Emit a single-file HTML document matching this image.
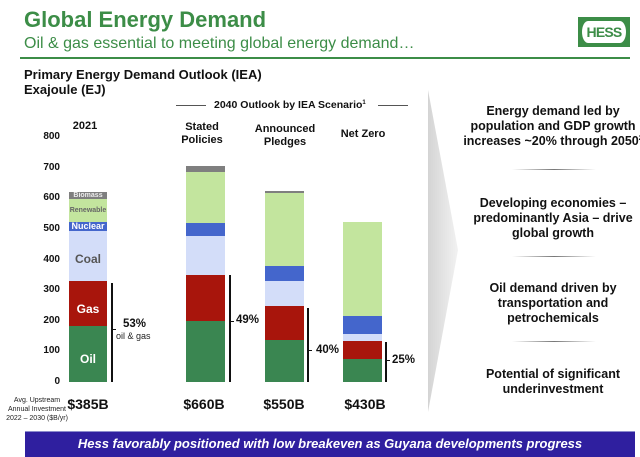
<!DOCTYPE html><html><head><style>
body{margin:0;width:640px;height:456px;background:#fff;position:relative;overflow:hidden;font-family:"Liberation Sans",Arial,sans-serif;}
.a{position:absolute;white-space:nowrap}
.b{position:absolute}
.c{text-align:center;font-weight:bold;color:#111}
.y{position:absolute;left:30px;width:30px;text-align:right;font-size:10px;font-weight:bold;color:#111}
.r{position:absolute;left:462px;width:182px;text-align:center;font-size:12.5px;font-weight:bold;line-height:15px;color:#111}
.sep{position:absolute;left:512px;width:84px;height:1px;background:linear-gradient(90deg,#fff,#777,#fff)}
sup{line-height:0;vertical-align:0;position:relative;top:-5px}
</style></head><body>
<div class="a" style="left:24px;top:7px;font-size:22px;font-weight:bold;color:#3c8d47">Global Energy Demand</div>
<div class="a" style="left:24px;top:35px;font-size:16px;color:#3c8d47">Oil &amp; gas essential to meeting global energy demand…</div>
<div class="b" style="left:20px;top:57px;width:610px;height:2px;background:#3c8d47"></div>
<div class="b" style="left:578px;top:17px;width:52px;height:30px;background:#3c8d47"></div>
<div class="b" style="left:582px;top:21px;width:44px;height:22px;background:#fff;border-radius:6px/11px"></div>
<div class="a" style="left:578px;top:24px;width:52px;text-align:center;font-size:14px;font-weight:900;color:#3c8d47;letter-spacing:-0.8px">HESS</div>
<div class="a" style="left:24px;top:67px;font-size:13px;font-weight:bold;color:#111;line-height:15px">Primary Energy Demand Outlook (IEA)<br>Exajoule (EJ)</div>
<div class="b" style="left:176px;top:105px;width:30px;height:1px;background:#555"></div>
<div class="a" style="left:214px;top:99px;font-size:10.5px;font-weight:bold;color:#111">2040 Outlook by IEA Scenario<sup style="font-size:6px;top:-4px">1</sup></div>
<div class="b" style="left:378px;top:105px;width:30px;height:1px;background:#555"></div>
<svg class="b" style="left:428px;top:90px" width="34" height="325"><defs><linearGradient id="g" x1="0" x2="1"><stop offset="0" stop-color="#d4d4d4"/><stop offset="1" stop-color="#f2f2f2"/></linearGradient></defs><polygon points="0,0 30,160 0,322" fill="url(#g)"/></svg>
<div class="y" style="top:131px">800</div><div class="y" style="top:162px">700</div><div class="y" style="top:192px">600</div><div class="y" style="top:223px">500</div><div class="y" style="top:254px">400</div><div class="y" style="top:284px">300</div><div class="y" style="top:315px">200</div><div class="y" style="top:345px">100</div><div class="y" style="top:376px">0</div>
<div class="a c" style="left:65px;width:40px;top:120px;font-size:11px">2021</div>
<div class="a c" style="left:172px;width:60px;top:121px;font-size:11px;line-height:13px">Stated<br>Policies</div>
<div class="a c" style="left:250px;width:70px;top:123px;font-size:11px;line-height:13px">Announced<br>Pledges</div>
<div class="a c" style="left:333px;width:60px;top:128px;font-size:11px">Net Zero</div>
<div class="b" style="left:69px;top:192px;width:38px;height:7px;background:#7f7f7f"></div>
<div class="b" style="left:69px;top:199px;width:38px;height:23px;background:#c3e59e"></div>
<div class="b" style="left:69px;top:222px;width:38px;height:9px;background:#4466cc"></div>
<div class="b" style="left:69px;top:231px;width:38px;height:50px;background:#d3ddf9"></div>
<div class="b" style="left:69px;top:281px;width:38px;height:45px;background:#a8150c"></div>
<div class="b" style="left:69px;top:326px;width:38px;height:56px;background:#3a8651"></div>
<div class="a" style="left:69px;width:38px;text-align:center;top:192px;font-size:7px;font-weight:bold;color:#eee">Biomass</div>
<div class="a" style="left:69px;width:38px;text-align:center;top:207px;font-size:7px;font-weight:bold;color:#666">Renewable</div>
<div class="a" style="left:69px;width:38px;text-align:center;top:221px;font-size:9px;font-weight:bold;color:#fff">Nuclear</div>
<div class="a" style="left:69px;width:38px;text-align:center;top:252px;font-size:12px;font-weight:bold;color:#555">Coal</div>
<div class="a" style="left:69px;width:38px;text-align:center;top:302px;font-size:12px;font-weight:bold;color:#fff">Gas</div>
<div class="a" style="left:69px;width:38px;text-align:center;top:352px;font-size:12px;font-weight:bold;color:#fff">Oil</div>
<div class="b" style="left:111px;top:283px;width:2px;height:99px;background:#111"></div><div class="b" style="left:113px;top:329px;width:3px;height:1px;background:#111"></div>
<div class="a" style="left:123px;top:318px;font-size:11.5px;font-weight:bold;color:#111">53%</div>
<div class="a" style="left:116px;top:331px;font-size:9px;color:#222">oil &amp; gas</div>
<div class="b" style="left:186px;top:166px;width:39px;height:6px;background:#7f7f7f"></div>
<div class="b" style="left:186px;top:172px;width:39px;height:51px;background:#c3e59e"></div>
<div class="b" style="left:186px;top:223px;width:39px;height:13px;background:#4466cc"></div>
<div class="b" style="left:186px;top:236px;width:39px;height:39px;background:#d3ddf9"></div>
<div class="b" style="left:186px;top:275px;width:39px;height:46px;background:#a8150c"></div>
<div class="b" style="left:186px;top:321px;width:39px;height:61px;background:#3a8651"></div>
<div class="b" style="left:229px;top:275px;width:2px;height:107px;background:#111"></div><div class="b" style="left:231px;top:321px;width:3px;height:1px;background:#111"></div>
<div class="a" style="left:236px;top:314px;font-size:11.5px;font-weight:bold;color:#111">49%</div>
<div class="b" style="left:265px;top:191px;width:39px;height:2px;background:#7f7f7f"></div>
<div class="b" style="left:265px;top:193px;width:39px;height:73px;background:#c3e59e"></div>
<div class="b" style="left:265px;top:266px;width:39px;height:15px;background:#4466cc"></div>
<div class="b" style="left:265px;top:281px;width:39px;height:25px;background:#d3ddf9"></div>
<div class="b" style="left:265px;top:306px;width:39px;height:34px;background:#a8150c"></div>
<div class="b" style="left:265px;top:340px;width:39px;height:42px;background:#3a8651"></div>
<div class="b" style="left:307px;top:308px;width:2px;height:74px;background:#111"></div><div class="b" style="left:309px;top:350px;width:3px;height:1px;background:#111"></div>
<div class="a" style="left:316px;top:344px;font-size:11.5px;font-weight:bold;color:#111">40%</div>
<div class="b" style="left:343px;top:222px;width:39px;height:94px;background:#c3e59e"></div>
<div class="b" style="left:343px;top:316px;width:39px;height:18px;background:#4466cc"></div>
<div class="b" style="left:343px;top:334px;width:39px;height:7px;background:#d3ddf9"></div>
<div class="b" style="left:343px;top:341px;width:39px;height:18px;background:#a8150c"></div>
<div class="b" style="left:343px;top:359px;width:39px;height:23px;background:#3a8651"></div>
<div class="b" style="left:385px;top:342px;width:2px;height:40px;background:#111"></div><div class="b" style="left:387px;top:360px;width:3px;height:1px;background:#111"></div>
<div class="a" style="left:392px;top:354px;font-size:11.5px;font-weight:bold;color:#111">25%</div>
<div class="a" style="left:4px;top:396px;width:66px;text-align:center;font-size:7px;line-height:9px;color:#222">Avg. Upstream<br>Annual Investment<br>2022 – 2030 ($B/yr)</div>
<div class="a c" style="left:60px;width:56px;top:396px;font-size:14px">$385B</div>
<div class="a c" style="left:176px;width:56px;top:396px;font-size:14px">$660B</div>
<div class="a c" style="left:256px;width:56px;top:396px;font-size:14px">$550B</div>
<div class="a c" style="left:337px;width:56px;top:396px;font-size:14px">$430B</div>
<div class="r" style="top:104px">Energy demand led by<br>population and GDP growth<br>increases ~20% through 2050<sup style="font-size:7px">2</sup></div>
<div class="sep" style="top:169px"></div>
<div class="r" style="top:196px">Developing economies –<br>predominantly Asia – drive<br>global growth</div>
<div class="sep" style="top:256px"></div>
<div class="r" style="top:281px">Oil demand driven by<br>transportation and<br>petrochemicals</div>
<div class="sep" style="top:341px"></div>
<div class="r" style="top:367px">Potential of significant<br>underinvestment</div>
<div class="b" style="left:25px;top:431px;width:610px;height:25px;background:#2f1f9f;border-top:1px solid #8c8ccc"></div>
<div class="a" style="left:25px;width:610px;text-align:center;top:436px;font-size:13px;font-weight:bold;font-style:italic;color:#fff">Hess favorably positioned with low breakeven as Guyana developments progress</div>
</body></html>
